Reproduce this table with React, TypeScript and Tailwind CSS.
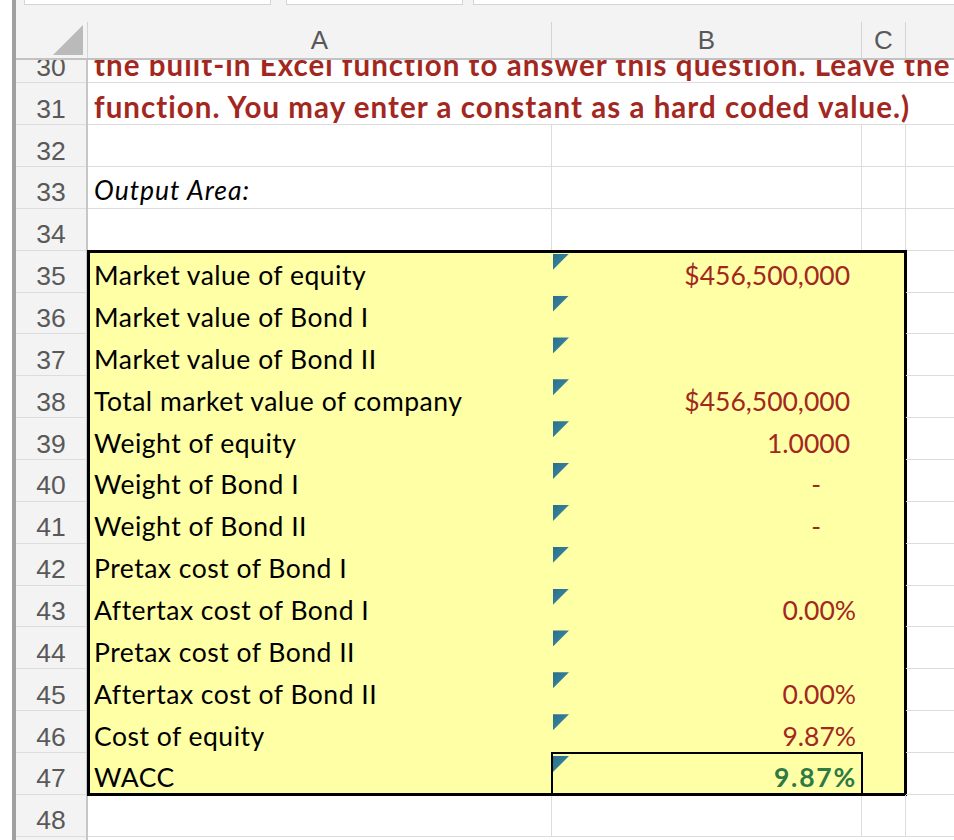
import React from "react";

const ROWH = "h-[41.86px]";

type Row = {
  n: number;
  label: string;
  value?: string;
  kind?: "cur" | "pct" | "dash" | "num" | "wacc";
};

const rows: Row[] = [
  { n: 35, label: "Market value of equity", value: "$456,500,000", kind: "cur" },
  { n: 36, label: "Market value of Bond I" },
  { n: 37, label: "Market value of Bond II" },
  { n: 38, label: "Total market value of company", value: "$456,500,000", kind: "cur" },
  { n: 39, label: "Weight of equity", value: "1.0000", kind: "num" },
  { n: 40, label: "Weight of Bond I", value: "-", kind: "dash" },
  { n: 41, label: "Weight of Bond II", value: "-", kind: "dash" },
  { n: 42, label: "Pretax cost of Bond I" },
  { n: 43, label: "Aftertax cost of Bond I", value: "0.00%", kind: "pct" },
  { n: 44, label: "Pretax cost of Bond II" },
  { n: 45, label: "Aftertax cost of Bond II", value: "0.00%", kind: "pct" },
  { n: 46, label: "Cost of equity", value: "9.87%", kind: "pct" },
  { n: 47, label: "WACC", value: "9.87%", kind: "wacc" },
];

const rowNums = Array.from({ length: 19 }, (_, i) => 30 + i);

function RowNum({ n, first }: { n: number; first?: boolean }) {
  return (
    <div
      className={`${ROWH} shrink-0 flex items-end justify-center pb-[2px] border-b border-[#dcdcdc] text-[26.5px] leading-none text-[#595959] ${
        first ? "mt-[-18.56px]" : ""
      }`}
      style={{ fontFamily: '"Liberation Sans", Arial, sans-serif' }}
    >
      {n}
    </div>
  );
}

function PlainRow({ children }: { children?: React.ReactNode }) {
  return (
    <div className={`${ROWH} shrink-0 flex`}>
      <div className="w-[464px] shrink-0 border-r border-b border-[#dcdcdc] flex items-end pl-[6px] pb-[4px]">
        {children}
      </div>
      <div className="w-[310px] shrink-0 border-r border-b border-[#dcdcdc]" />
      <div className="w-[44px] shrink-0 border-r border-b border-[#dcdcdc]" />
      <div className="flex-1 border-b border-[#dcdcdc]" />
    </div>
  );
}

function Triangle() {
  return (
    <div className="absolute left-[1px] top-[3px] w-[16px] h-[16px] bg-gradient-to-br from-[#2a6f8c] via-[#347e9a] to-[#5e9fb5] [clip-path:polygon(0_0,100%_0,0_100%)]" />
  );
}

function YellowRow({ r }: { r: Row }) {
  const pr =
    r.kind === "cur" || r.kind === "num"
      ? "pr-[12px]"
      : r.kind === "dash"
      ? "pr-[41px]"
      : r.kind === "wacc"
      ? "pr-[5px]"
      : "pr-[6px]";
  const color =
    r.kind === "wacc"
      ? "text-[#2e7a45] font-bold tracking-[1.8px]"
      : "text-[#a2281f]";
  return (
    <div className={`${ROWH} shrink-0 flex bg-[#ffffa6]`}>
      <div className="w-[464px] shrink-0 flex items-end pl-[6px] pb-[4px] text-black whitespace-nowrap tracking-[0.5px]">
        {r.label}
      </div>
      <div
        className={`w-[310px] shrink-0 relative flex items-end justify-end pb-[4px] ${pr} ${color} ${
          r.kind === "wacc" ? "outline-2 outline-solid outline-black -outline-offset-1" : ""
        }`}
      >
        <Triangle />
        {r.value ?? ""}
      </div>
      <div className="w-[44px] shrink-0" />
    </div>
  );
}

export default function App() {
  return (
    <div
      className="w-[954px] h-[840px] overflow-hidden bg-white flex text-[26.5px] leading-none"
      style={{ fontFamily: 'Lato, "Open Sans", sans-serif' }}
    >
      <div className="w-[12px] shrink-0 bg-white" />
      <div className="w-[4px] shrink-0 bg-[#a0a0a0]" />
      <div className="flex-1 min-w-0 flex flex-col">
        {/* top chrome */}
        <div className="h-[60px] shrink-0 bg-[#f3f3f3] flex flex-col">
          <div className="h-[5px] shrink-0 flex pl-[8px]">
            <div className="w-[247px] shrink-0 bg-white border border-t-0 border-[#d4d4d4]" />
            <div className="w-[15px] shrink-0" />
            <div className="w-[177px] shrink-0 bg-white border border-t-0 border-[#d4d4d4]" />
            <div className="w-[10px] shrink-0" />
            <div className="flex-1 bg-white border border-t-0 border-r-0 border-[#d4d4d4]" />
          </div>
          <div className="h-[17px] shrink-0" />
          <div
            className="h-[38px] shrink-0 flex border-b-2 border-[#c2c2c2] text-[26px] leading-none text-[#595959]"
            style={{ fontFamily: '"Liberation Sans", Arial, sans-serif' }}
          >
            <div className="w-[72px] shrink-0 border-r border-[#d4d4d4] pl-[37px] pt-[3px]">
              <div className="w-[30px] h-[30px] bg-[#bababa] [clip-path:polygon(100%_0,100%_100%,0_100%)]" />
            </div>
            <div className="w-[464px] shrink-0 border-r border-[#d4d4d4] flex items-center justify-center">
              A
            </div>
            <div className="w-[310px] shrink-0 border-r border-[#d4d4d4] flex items-center justify-center">
              B
            </div>
            <div className="w-[44px] shrink-0 border-r border-[#d4d4d4] flex items-center justify-center">
              C
            </div>
            <div className="flex-1" />
          </div>
        </div>

        {/* body */}
        <div className="flex-1 min-h-0 overflow-hidden flex">
          <div className="w-[72px] shrink-0 bg-[#f3f3f3] border-r-2 border-[#c6c6c6] flex flex-col">
            {rowNums.map((n, i) => (
              <RowNum key={n} n={n} first={i === 0} />
            ))}
          </div>
          <div className="flex-1 min-w-0 flex flex-col">
            <div className={`${ROWH} shrink-0 mt-[-18.56px] border-b border-[#dcdcdc] flex items-end pl-[6px] pb-[3px] font-bold text-[29.5px] tracking-[1.05px] text-[#a2281f] whitespace-nowrap`}>
              the built-in Excel function to answer this question. Leave the
            </div>
            <div className={`${ROWH} shrink-0 border-b border-[#dcdcdc] flex items-end pl-[6px] pb-[3px] font-bold text-[29.5px] tracking-[1.05px] text-[#a2281f] whitespace-nowrap`}>
              function. You may enter a constant as a hard coded value.)
            </div>
            <PlainRow />
            <PlainRow>
              <span className="italic text-black tracking-[1px]">Output Area:</span>
            </PlainRow>
            <PlainRow />
            <div className="flex shrink-0">
              <div className="w-[818px] shrink-0 flex flex-col outline-3 outline-solid outline-black -outline-offset-2">
                {rows.map((r) => (
                  <YellowRow key={r.n} r={r} />
                ))}
              </div>
              <div className="flex-1 flex flex-col">
                {rows.map((r) => (
                  <div key={r.n} className={`${ROWH} shrink-0 border-b border-[#dcdcdc]`} />
                ))}
              </div>
            </div>
            <PlainRow />
          </div>
        </div>
      </div>
    </div>
  );
}
